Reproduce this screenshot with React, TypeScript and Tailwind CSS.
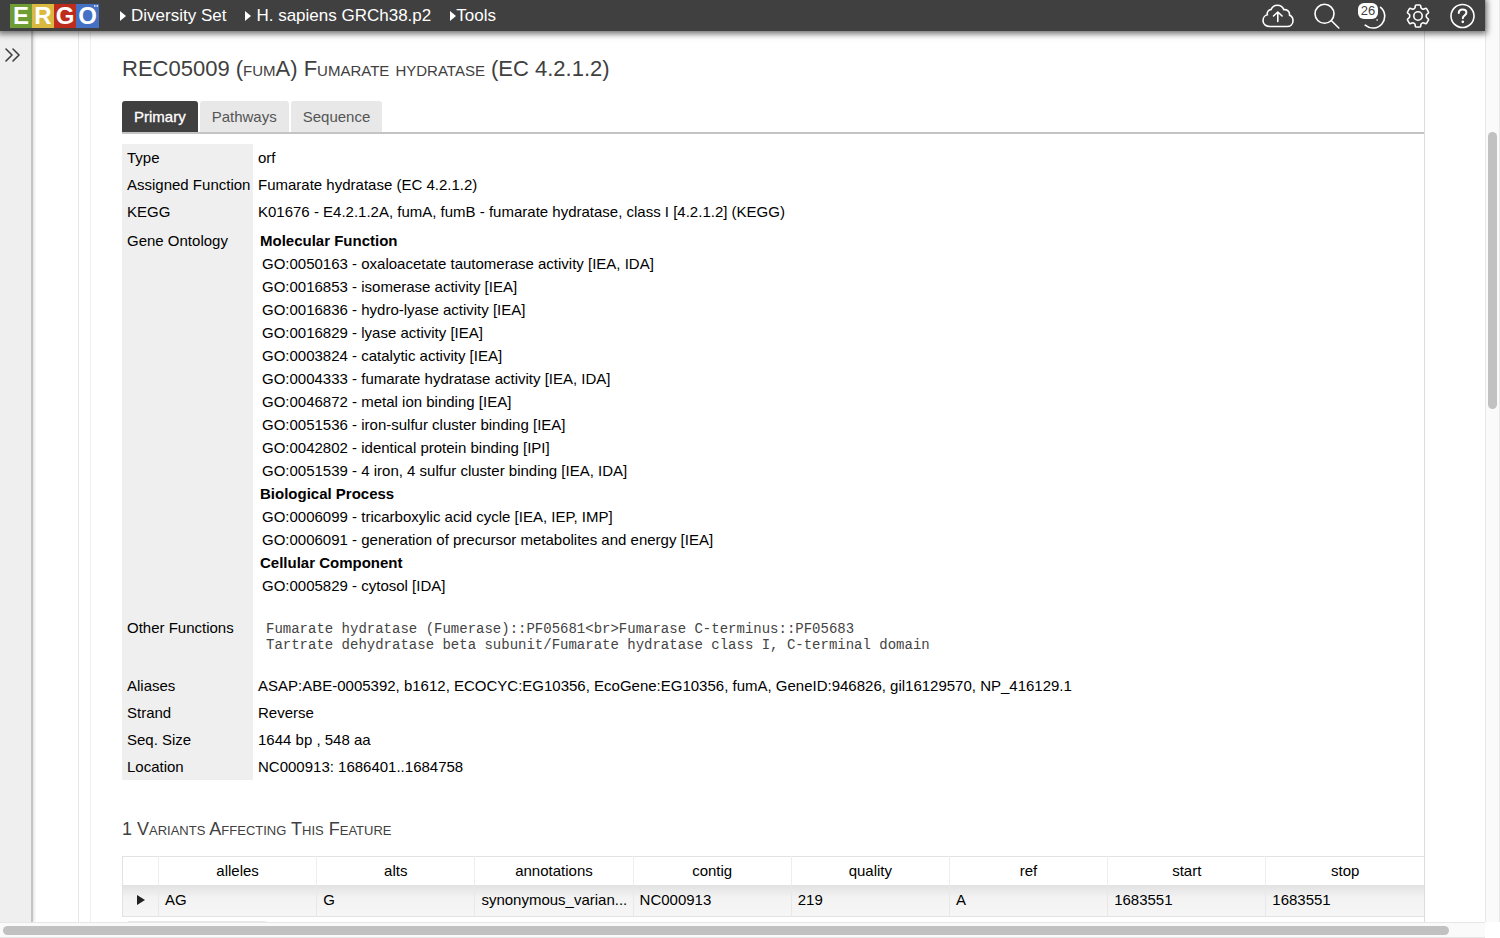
import React from "react";

type Row = { label: string; value: string };

const topRows: Row[] = [
  { label: "Type", value: "orf" },
  { label: "Assigned Function", value: "Fumarate hydratase (EC 4.2.1.2)" },
  { label: "KEGG", value: "K01676 - E4.2.1.2A, fumA, fumB - fumarate hydratase, class I [4.2.1.2] (KEGG)" },
];

const ontology = [
  {
    title: "Molecular Function",
    terms: [
      "GO:0050163 - oxaloacetate tautomerase activity [IEA, IDA]",
      "GO:0016853 - isomerase activity [IEA]",
      "GO:0016836 - hydro-lyase activity [IEA]",
      "GO:0016829 - lyase activity [IEA]",
      "GO:0003824 - catalytic activity [IEA]",
      "GO:0004333 - fumarate hydratase activity [IEA, IDA]",
      "GO:0046872 - metal ion binding [IEA]",
      "GO:0051536 - iron-sulfur cluster binding [IEA]",
      "GO:0042802 - identical protein binding [IPI]",
      "GO:0051539 - 4 iron, 4 sulfur cluster binding [IEA, IDA]",
    ],
  },
  {
    title: "Biological Process",
    terms: [
      "GO:0006099 - tricarboxylic acid cycle [IEA, IEP, IMP]",
      "GO:0006091 - generation of precursor metabolites and energy [IEA]",
    ],
  },
  { title: "Cellular Component", terms: ["GO:0005829 - cytosol [IDA]"] },
];

const bottomRows: Row[] = [
  {
    label: "Aliases",
    value:
      "ASAP:ABE-0005392, b1612, ECOCYC:EG10356, EcoGene:EG10356, fumA, GeneID:946826, gil16129570, NP_416129.1",
  },
  { label: "Strand", value: "Reverse" },
  { label: "Seq. Size", value: "1644 bp , 548 aa" },
  { label: "Location", value: "NC000913: 1686401..1684758" },
];

const otherFunctions =
  "Fumarate hydratase (Fumerase)::PF05681<br>Fumarase C-terminus::PF05683\nTartrate dehydratase beta subunit/Fumarate hydratase class I, C-terminal domain";

const variantColumns = ["alleles", "alts", "annotations", "contig", "quality", "ref", "start", "stop"];
const variant = ["AG", "G", "synonymous_varian...", "NC000913", "219", "A", "1683551", "1683551"];

function Caret() {
  return (
    <svg width="6" height="10" viewBox="0 0 6 10" fill="currentColor" aria-hidden="true">
      <path d="M0 0L6 5L0 10Z" />
    </svg>
  );
}

function Logo() {
  return (
    <a href="#home" aria-label="ERGO" className="relative flex h-6 text-2xl leading-6 font-bold text-white">
      <span className="w-[22px] bg-[#6d9d34] text-center">E</span>
      <span className="w-[22px] bg-[#d9b93f] text-center">R</span>
      <span className="w-[22px] bg-[#bd2c1c] text-center">G</span>
      <span className="w-[23px] bg-[#4471c4] text-center">O</span>
      <svg className="absolute top-px right-px" width="4" height="2" viewBox="0 0 4 2" fill="currentColor" opacity="0.7" aria-hidden="true">
        <path d="M0 0H1.500V2H0ZM2.500 0H4V2H2.500Z" />
      </svg>
    </a>
  );
}

function DetailRow({ label, value }: Row) {
  return (
    <tr className="h-[27px]">
      <th scope="row" className="bg-[#efefef] pl-[5px] text-left font-normal whitespace-nowrap">
        {label}
      </th>
      <td className="px-[5px]">{value}</td>
    </tr>
  );
}

const iconProps = {
  fill: "none",
  stroke: "currentColor",
  strokeWidth: 1.6,
  strokeLinecap: "round" as const,
  strokeLinejoin: "round" as const,
  "aria-hidden": true,
};

function Header() {
  return (
    <header className="z-10 flex h-[31px] shrink-0 items-center justify-between bg-[#404040] pr-[9px] pl-2.5 text-white shadow-[0_1px_6px_2px_rgba(0,0,0,0.55)]">
      <div className="flex items-center">
        <Logo />
        <nav className="ml-[21px] flex items-center gap-[19px] text-[17px] leading-5">
          <a href="#diversity" className="flex items-center gap-[5px]"><Caret />Diversity Set</a>
          <a href="#organism" className="flex items-center gap-[5px]"><Caret />H. sapiens GRCh38.p2</a>
          <a href="#tools" className="flex items-center"><Caret />Tools</a>
        </nav>
      </div>
      <div className="flex items-center gap-5">
        <button type="button" aria-label="Upload">
          <svg width="32" height="24" viewBox="0 0 32 24" {...iconProps}>
            <path d="M8 22.5C3.800 22.500 1 20 1 16.600C1 13.500 3.200 11.200 5.400 10.800C4.600 8 6.800 5.500 9 5.600C10.200 2.800 12.600 1.300 15.300 1.300C18.500 1.300 20.800 3 21.800 5.700C25 5.200 28 7.500 27.500 11.200C29.700 11.900 31 14 31 16.700C31 20 28.500 22.500 25 22.500Z" />
            <path d="M15.800 17.500V8.200M11.500 12L15.800 8L20.100 12" />
          </svg>
        </button>
        <button type="button" aria-label="Search">
          <svg width="26" height="26" viewBox="0 0 26 26" {...iconProps}>
            <circle cx="10.500" cy="10.800" r="9.500" />
            <path d="M17.500 17.800L24.800 25" />
          </svg>
        </button>
        <button type="button" aria-label="26 jobs" className="relative">
          <svg width="26" height="26" viewBox="0 0 26 26" {...iconProps}>
            <path d="M20.600 4.300A11.300 11.300 0 0 1 5.200 22.200" />
            <circle cx="17" cy="17" r="0.300" strokeWidth="0.800" />
          </svg>
          <span className="absolute top-0 -left-0.5 h-4 w-5 rounded-md bg-white text-center text-[13px] leading-4 text-[#404040]">26</span>
        </button>
        <button type="button" aria-label="Settings">
          <svg width="24" height="24" viewBox="0 0 24 24" {...iconProps}>
            <path d="M10.300 1H13.700Q14.600 1 14.700 1.900L14.900 3.400Q15 4.200 15.800 4.600L16.500 5Q17.200 5.400 17.900 5.100L19.300 4.500Q20.200 4.100 20.700 4.900L22.400 7.800Q22.900 8.600 22.200 9.200L21 10.100Q20.300 10.600 20.300 11.400V12.600Q20.300 13.400 21 13.900L22.200 14.800Q22.900 15.400 22.400 16.200L20.700 19.100Q20.200 19.900 19.300 19.500L17.900 18.900Q17.200 18.600 16.500 19L15.800 19.400Q15 19.800 14.900 20.600L14.700 22.100Q14.600 23 13.700 23H10.300Q9.400 23 9.300 22.100L9.100 20.600Q9 19.800 8.200 19.400L7.500 19Q6.800 18.600 6.100 18.900L4.700 19.500Q3.800 19.900 3.300 19.100L1.600 16.200Q1.100 15.400 1.800 14.800L3 13.900Q3.700 13.400 3.700 12.600V11.400Q3.700 10.600 3 10.100L1.800 9.200Q1.100 8.600 1.600 7.800L3.300 4.900Q3.800 4.100 4.700 4.500L6.100 5.100Q6.800 5.400 7.500 5L8.200 4.600Q9 4.200 9.100 3.400L9.300 1.900Q9.400 1 10.300 1Z" />
            <circle cx="12" cy="12" r="4.200" />
          </svg>
        </button>
        <button type="button" aria-label="Help">
          <svg width="26" height="26" viewBox="0 0 26 26" {...iconProps}>
            <circle cx="12.500" cy="13" r="11.500" />
            <path d="M8.800 10C8.800 7.800 10.300 6.500 12.600 6.500S16.400 7.900 16.400 9.700C16.400 12.400 12.800 12.300 12.800 15.200" strokeWidth="2" />
            <circle cx="12.800" cy="18.800" r="0.600" strokeWidth="1.500" />
          </svg>
        </button>
      </div>
    </header>
  );
}

export default function App() {
  return (
    <div className="flex h-screen overflow-hidden bg-white font-['Liberation_Sans',Arial,sans-serif] text-[15px] text-black">
      <div className="flex min-w-0 flex-1 flex-col">
        <Header />
        <div className="flex min-h-0 flex-1">
          <aside className="w-[33px] shrink-0 border-r-2 border-[#c4c4c4] bg-[#efefef] pt-[17px] pl-[5px] text-[#404040] shadow-[1px_0_3px_rgba(0,0,0,0.15)]">
            <button type="button" aria-label="Expand panel" className="block">
              <svg width="15" height="14" viewBox="0 0 15 14" {...iconProps}>
                <path d="M1 1L7 7L1 13M8 1L14 7L8 13" />
              </svg>
            </button>
          </aside>
          <div className="ml-[45px] flex min-w-0 flex-1 overflow-hidden border-l border-[#e6e6e6] pl-[11px]">
            <main className="mr-[60px] min-w-0 flex-1 border-r border-l border-r-[#dcdcdc] border-l-[#efefef] pl-[31px]">
              <h1 className="pt-[25px] text-[22px] leading-[26px] text-[#404040] [font-variant:small-caps]">
                REC05009 (fumA) Fumarate hydratase (EC 4.2.1.2)
              </h1>
              <div role="tablist" className="mt-[19px] flex gap-0.5 border-b-2 border-[#c4c4c4] text-[#555]">
                <button type="button" role="tab" aria-selected="true" className="h-[31px] rounded-t-[3px] bg-[#404040] px-3 pt-0.5 text-white [-webkit-text-stroke:0.3px]">Primary</button>
                <button type="button" role="tab" aria-selected="false" className="h-[31px] rounded-t-[3px] bg-[#e8e8e8] px-3 pt-0.5">Pathways</button>
                <button type="button" role="tab" aria-selected="false" className="h-[31px] rounded-t-[3px] bg-[#e8e8e8] px-3 pt-0.5">Sequence</button>
              </div>
              <table className="mt-2.5 w-full table-fixed border-collapse leading-[23px]">
                <colgroup>
                  <col className="w-[131px]" />
                  <col />
                </colgroup>
                <tbody>
                  {topRows.map((r) => <DetailRow key={r.label} {...r} />)}
                  <tr className="align-top">
                    <th scope="row" className="bg-[#efefef] pt-1 pl-[5px] text-left font-normal">Gene Ontology</th>
                    <td className="px-[7px] pt-1 pb-[17px]">
                      {ontology.map((g) => (
                        <section key={g.title}>
                          <h2 className="font-bold">{g.title}</h2>
                          <ul className="pl-0.5">
                            {g.terms.map((t) => <li key={t}>{t}</li>)}
                          </ul>
                        </section>
                      ))}
                    </td>
                  </tr>
                  <tr className="h-[58px] align-top">
                    <th scope="row" className="bg-[#efefef] pt-0.5 pl-[5px] text-left font-normal">Other Functions</th>
                    <td className="px-[13px] pt-[7px]">
                      <pre className="font-['Liberation_Mono','Courier_New',monospace] text-[14px] leading-4 text-[#444]">{otherFunctions}</pre>
                    </td>
                  </tr>
                  {bottomRows.map((r) => <DetailRow key={r.label} {...r} />)}
                </tbody>
              </table>
              <h2 className="mt-[37px] text-lg leading-6 text-[#404040] [font-variant:small-caps]">1 Variants Affecting This Feature</h2>
              <table className="mt-[15px] w-full table-fixed border-collapse border border-r-0 border-[#e2e2e2]">
                <thead>
                  <tr className="h-7">
                    <th className="w-9 border-r border-[#eee]" aria-label="Expand" />
                    {variantColumns.map((c) => (
                      <th key={c} scope="col" className="border-r border-[#eee] p-0 font-normal last:border-r-0">{c}</th>
                    ))}
                  </tr>
                </thead>
                <tbody>
                  <tr className="h-8 bg-linear-to-b from-[#e2e2e2] via-[#f3f3f3] via-40% to-[#f6f6f6]">
                    <td className="border-r border-[#e8e8e8] pl-3.5 text-[#222]">
                      <button type="button" aria-label="Show details" className="block">
                        <svg width="8" height="10" viewBox="0 0 8 10" fill="currentColor" aria-hidden="true"><path d="M0 0L8 5L0 10Z" /></svg>
                      </button>
                    </td>
                    {variant.map((v, i) => (
                      <td key={i} className="overflow-hidden border-r border-[#e8e8e8] pl-1.5 whitespace-nowrap last:border-r-0">{v}</td>
                    ))}
                  </tr>
                </tbody>
              </table>
              <div className="mt-1 ml-1 h-2 w-[142px] rounded-full bg-[#e8e8e8]" />
            </main>
          </div>
        </div>
        <div className="flex h-4 shrink-0 items-center border-t border-b border-[#e6e6e6] bg-[#fafafa] pr-9 pl-[3px]">
          <div className="h-[9px] flex-1 rounded-full bg-[#c1c1c1]" />
        </div>
      </div>
      <div className="mb-4 flex w-[15px] shrink-0 justify-center border-r border-l border-[#e8e8e8] bg-[#fafafa] pt-[132px]">
        <div className="h-[277px] w-[9px] rounded-full bg-[#c1c1c1]" />
      </div>
    </div>
  );
}
